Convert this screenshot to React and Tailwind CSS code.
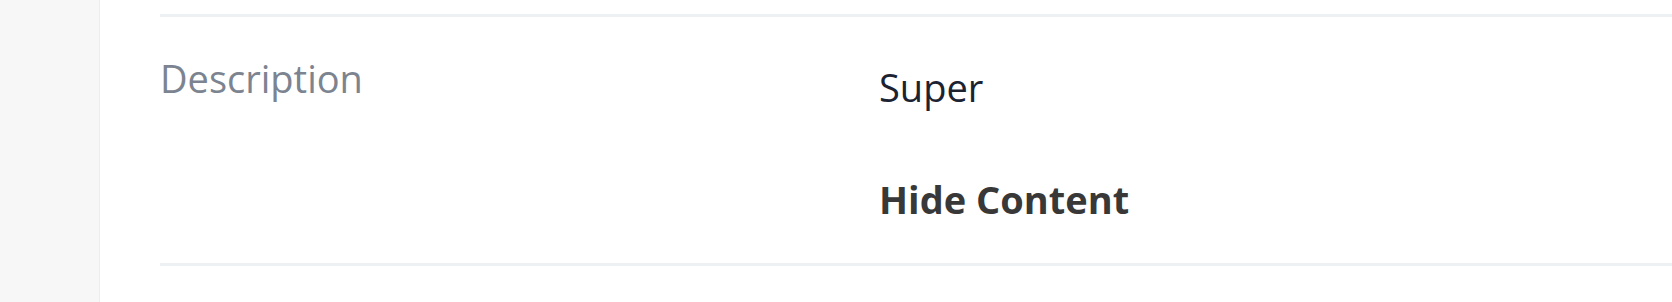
export default function App() {
  return (
    <div className="flex h-[302px] w-full overflow-hidden bg-white" style={{ fontFamily: '"Open Sans", "Noto Sans", sans-serif' }}>
      {/* side rail */}
      <aside className="w-[100px] shrink-0 bg-[#f7f7f7] border-r border-[#ededed]" />

      <main className="flex-1 pl-[60px] pt-[14px]">
        <div className="flex border-y-[3px] border-[#eef1f4]">
          <div className="w-[719px] shrink-0 pt-[42px] text-[38px] leading-none text-[#7b8490]">
            Description
          </div>
          <div className="flex flex-col pt-[51px] pb-[45px]">
            <p className="text-[38px] leading-none text-[#1b2232]">Super</p>
            <button className="mt-[74px] text-left text-[38px] font-bold leading-none text-[#383838]">
              Hide Content
            </button>
          </div>
        </div>
      </main>
    </div>
  )
}
